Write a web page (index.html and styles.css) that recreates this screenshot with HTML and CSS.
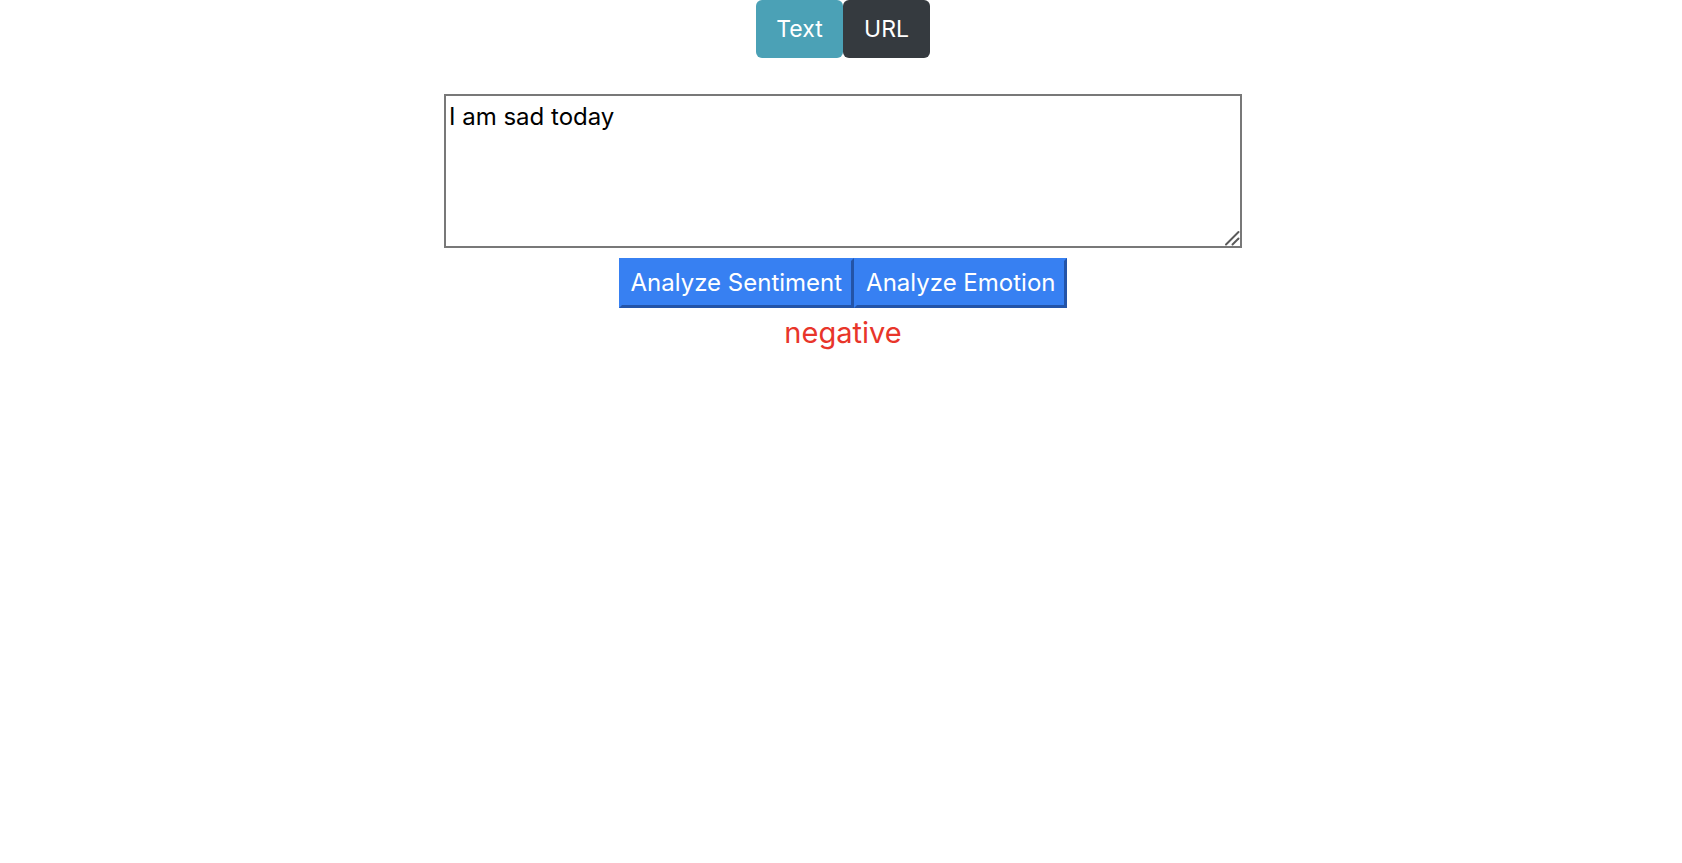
FILE: index.html
```html
<!DOCTYPE html>
<html lang="en">
<head>
<meta charset="utf-8">
<title>Sentiment Analyzer</title>
<link rel="stylesheet" href="styles.css">
</head>
<body>
<main class="app">
  <div class="mode-toggle">
    <button class="mode-btn mode-text">Text</button>
    <button class="mode-btn mode-url">URL</button>
  </div>
  <div class="input-wrap">
    <textarea class="input-box">I am sad today</textarea>
    <svg class="grip" width="16" height="16" viewBox="0 0 16 16" aria-hidden="true">
      <line x1="2" y1="14.5" x2="14.5" y2="2" stroke="#5a5a5a" stroke-width="2" stroke-linecap="round"/>
      <line x1="8.5" y1="14.5" x2="14.5" y2="8.5" stroke="#5a5a5a" stroke-width="2" stroke-linecap="round"/>
    </svg>
  </div>
  <div class="actions">
    <button class="action-btn">Analyze Sentiment</button>
    <button class="action-btn">Analyze Emotion</button>
  </div>
  <div class="result">negative</div>
</main>
</body>
</html>
```
FILE: styles.css
```css
html, body {
  margin: 0;
  padding: 0;
  background: #ffffff;
}
body {
  font-family: Inter, "Noto Sans", "Liberation Sans", sans-serif;
}
.app {
  display: flex;
  flex-direction: column;
  align-items: center;
  padding-left: 4px;
}
.mode-toggle {
  display: flex;
}
.mode-btn {
  width: 87px;
  height: 58px;
  border: none;
  border-radius: 6px;
  color: #ffffff;
  font-family: inherit;
  font-size: 23px;
  padding: 0;
  cursor: pointer;
}
.mode-text {
  background: #4ba1b6;
}
.mode-url {
  background: #353a3f;
}
.input-wrap {
  position: relative;
  margin-top: 36px;
  display: flex;
}
.input-box {
  box-sizing: border-box;
  width: 798px;
  height: 154px;
  border: 2px solid #787878;
  padding: 6px 3px 2px 3px;
  font-family: inherit;
  font-size: 24px;
  line-height: 30px;
  color: #000000;
  outline: none;
  resize: none;
}
.grip {
  position: absolute;
  right: 2px;
  bottom: 2px;
}
.actions {
  display: flex;
  margin-top: 10px;
}
.action-btn {
  box-sizing: border-box;
  height: 50px;
  padding: 0 9px 2px 9px;
  background: #3780f2;
  color: #ffffff;
  font-family: inherit;
  font-size: 24px;
  border-width: 3px;
  border-style: solid;
  border-color: #3780f2 #2354a8 #2354a8 #3780f2;
  cursor: pointer;
}
.result {
  margin-top: 7px;
  color: #e8352a;
  font-size: 29px;
  line-height: 36px;
}
```
